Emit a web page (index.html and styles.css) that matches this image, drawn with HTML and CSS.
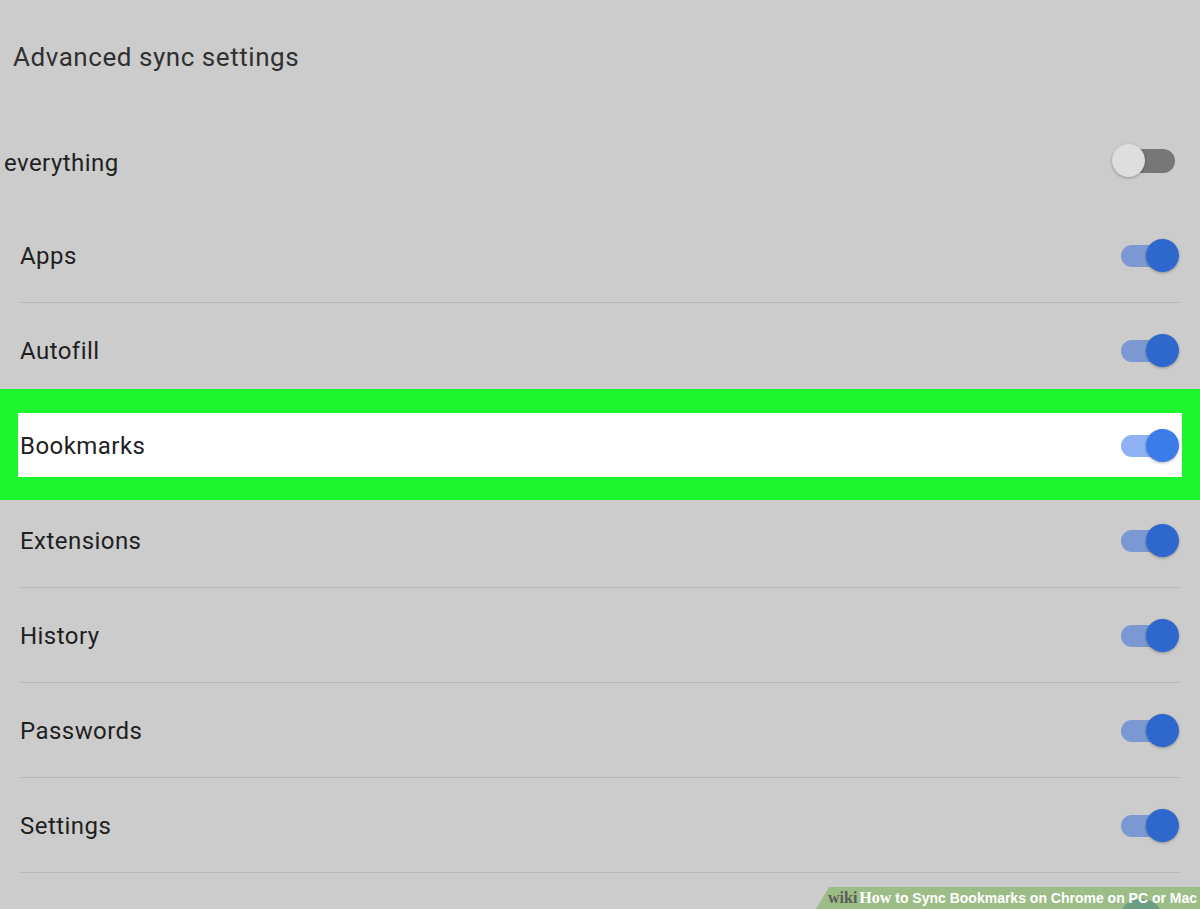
FILE: index.html
```html
<!DOCTYPE html>
<html>
<head>
<meta charset="utf-8">
<title>Advanced sync settings</title>
<link rel="stylesheet" href="styles.css">
</head>
<body>
<div class="page">
  <header class="header"><h1 class="title">Advanced sync settings</h1></header>
  <div class="row-everything">
    <span class="label">everything</span>
    <span class="toggle off"><span class="track"></span><span class="knob"></span></span>
  </div>
  <ul class="list">
    <li class="row"><span class="label">Apps</span><span class="toggle on"><span class="track"></span><span class="knob"></span></span></li>
    <li class="row"><span class="label">Autofill</span><span class="toggle on"><span class="track"></span><span class="knob"></span></span></li>
    <li class="row highlighted"><span class="hl"></span><span class="label">Bookmarks</span><span class="toggle on bright"><span class="track"></span><span class="knob"></span></span></li>
    <li class="row"><span class="label">Extensions</span><span class="toggle on"><span class="track"></span><span class="knob"></span></span></li>
    <li class="row"><span class="label">History</span><span class="toggle on"><span class="track"></span><span class="knob"></span></span></li>
    <li class="row"><span class="label">Passwords</span><span class="toggle on"><span class="track"></span><span class="knob"></span></span></li>
    <li class="row"><span class="label">Settings</span><span class="toggle on"><span class="track"></span><span class="knob"></span></span></li>
  </ul>
  <div class="watermark">
    <span class="blob"></span>
    <span class="wm-text"><span class="wm-wiki">wiki</span><span class="wm-how">How</span> to Sync Bookmarks on Chrome on PC or Mac</span>
  </div>
</div>
</body>
</html>
```

FILE: styles.css
```css
html, body {
  margin: 0;
  padding: 0;
  background: #cccccc;
}
body {
  font-family: Roboto, "Noto Sans", "Liberation Sans", sans-serif;
  color: #1f1f1f;
  overflow: hidden;
}
.page {
  position: relative;
  width: 1200px;
  height: 909px;
  overflow: hidden;
}
.header {
  height: 110px;
  display: flex;
  align-items: center;
  padding-left: 13px;
  padding-top: 4px;
  box-sizing: border-box;
}
.title {
  margin: 0;
  font-size: 26px;
  font-weight: 400;
  color: #303030;
  letter-spacing: 0.55px;
}
.label {
  font-size: 24px;
  letter-spacing: 0.45px;
  position: relative;
  z-index: 1;
}
.row-everything {
  height: 98px;
  display: flex;
  align-items: center;
  justify-content: space-between;
  padding: 8px 25px 0 4px;
  box-sizing: border-box;
}
.row-everything .toggle {
  margin-top: -4px;
}
.list {
  list-style: none;
  margin: 0;
  padding: 0 20px 0 20px;
}
.row {
  position: relative;
  height: 95px;
  box-sizing: border-box;
  display: flex;
  align-items: center;
  justify-content: space-between;
  padding-right: 1px;
  padding-top: 2px;
  border-bottom: 1px solid #b9b9b9;
}
.row.highlighted {
  border-bottom-color: transparent;
}
.hl {
  position: absolute;
  top: -9px;
  bottom: -8px;
  left: -20px;
  right: -20px;
  background: #ffffff;
  border-style: solid;
  border-color: #1df52f;
  border-width: 24px 18px 23px 18px;
  z-index: 0;
}
.toggle {
  position: relative;
  z-index: 1;
  display: block;
  height: 34px;
}
.toggle .track {
  position: absolute;
  top: 6px;
  height: 22px;
  border-radius: 11px;
}
.toggle .knob {
  position: absolute;
  top: 0;
  width: 33px;
  height: 33px;
  border-radius: 50%;
  box-shadow: 0 1px 3px rgba(0, 0, 0, 0.3);
}
.toggle.on {
  width: 58px;
}
.toggle.on .track {
  left: 0;
  width: 50px;
  background: #7b98d2;
}
.toggle.on .knob {
  right: 0;
  background: #2f68cc;
}
.toggle.on.bright .track {
  background: #8fb2f4;
}
.toggle.on.bright .knob {
  background: #3b7ce8;
}
.toggle.off {
  width: 63px;
}
.toggle.off .track {
  left: 8px;
  right: 0;
  top: 5px;
  height: 24px;
  border-radius: 12px;
  background: #777777;
}
.toggle.off .knob {
  left: 0;
  background: #dedede;
}
.watermark {
  position: absolute;
  right: 0;
  bottom: 0;
  width: 384px;
  height: 22px;
  background: #9dbd88;
  clip-path: polygon(13px 0, 100% 0, 100% 100%, 0 100%);
  overflow: hidden;
}
.blob {
  position: absolute;
  left: 305px;
  top: 12px;
  width: 40px;
  height: 30px;
  border-radius: 50%;
  background: #6c9e86;
}
.wm-text {
  position: absolute;
  left: 12px;
  top: 2px;
  white-space: nowrap;
  font-family: "Liberation Sans", Arial, sans-serif;
  font-weight: 700;
  font-size: 14px;
  color: #ffffff;
}
.wm-wiki {
  font-family: "Liberation Serif", "Times New Roman", serif;
  font-size: 16px;
  color: #5b5b5b;
  margin-right: 2px;
}
.wm-how {
  font-family: "Liberation Serif", "Times New Roman", serif;
  font-size: 16px;
  color: #ffffff;
}
```
